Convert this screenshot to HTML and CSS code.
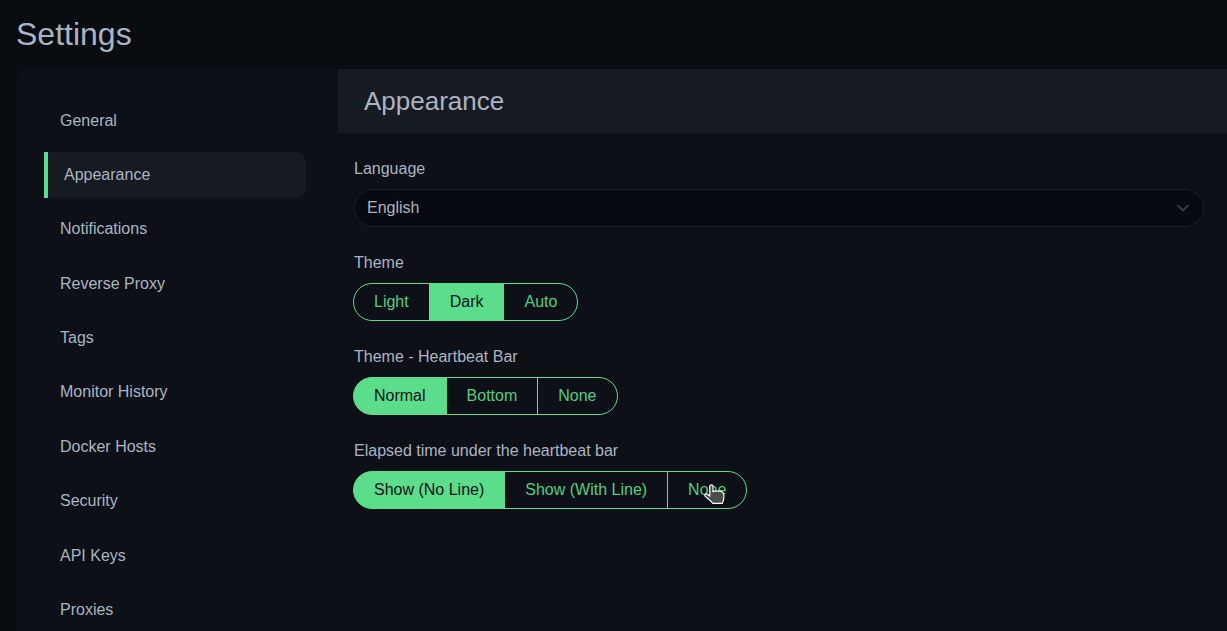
FILE: index.html
```html
<!DOCTYPE html>
<html lang="en">
<head>
    <meta charset="UTF-8">
    <title>Settings</title>
    <link rel="stylesheet" href="styles.css">
</head>
<body>
    <h1 class="page-title">Settings</h1>
    <div class="shadow-box">
        <div class="settings-menu">
            <div class="menu-item">General</div>
            <div class="menu-item active">Appearance</div>
            <div class="menu-item">Notifications</div>
            <div class="menu-item">Reverse Proxy</div>
            <div class="menu-item">Tags</div>
            <div class="menu-item">Monitor History</div>
            <div class="menu-item">Docker Hosts</div>
            <div class="menu-item">Security</div>
            <div class="menu-item">API Keys</div>
            <div class="menu-item">Proxies</div>
        </div>
        <div class="settings-content">
            <div class="settings-content-header">Appearance</div>
            <div class="settings-form">
                <div class="field">
                    <div class="form-label">Language</div>
                    <div class="form-select">
                        <span>English</span>
                        <svg class="select-arrow" width="16" height="16" viewBox="0 0 16 16"><path d="M3 5.500l5 5 5-5" fill="none" stroke="#343b44" stroke-width="2" stroke-linecap="round" stroke-linejoin="round"/></svg>
                    </div>
                </div>
                <div class="field">
                    <div class="form-label">Theme</div>
                    <div class="btn-group">
                        <div class="btn">Light</div>
                        <div class="btn checked">Dark</div>
                        <div class="btn">Auto</div>
                    </div>
                </div>
                <div class="field">
                    <div class="form-label">Theme - Heartbeat Bar</div>
                    <div class="btn-group">
                        <div class="btn checked">Normal</div>
                        <div class="btn">Bottom</div>
                        <div class="btn">None</div>
                    </div>
                </div>
                <div class="field">
                    <div class="form-label">Elapsed time under the heartbeat bar</div>
                    <div class="btn-group">
                        <div class="btn checked">Show (No Line)</div>
                        <div class="btn">Show (With Line)</div>
                        <div class="btn">None
                            <svg class="hand-cursor" width="21" height="22" viewBox="0 -1 20 21"><path d="M5.500 2c0-1.600 3-1.600 3 0v5.200c2-.7 4-.8 5.500-.3 1.500-.3 3 .3 4 1.100.8.800 1 2 1 4 0 2.500-.5 4.500-1.500 6.500H8.500C7 16 3.500 14 1 11.500c-1-1.200.5-2.700 2-1.700l2.500 1.700Z" fill="#4c4c4c" stroke="#fff" stroke-width="1.100" stroke-linejoin="round"/></svg>
                        </div>
                    </div>
                </div>
            </div>
        </div>
    </div>
</body>
</html>
```

FILE: styles.css
```css
* {
    box-sizing: border-box;
}

html, body {
    height: 631px;
    overflow: hidden;
}

body {
    margin: 0;
    padding: 0 0 0 16px;
    background: #090c10;
    color: #abb4c0;
    font-family: "Liberation Sans", Arial, sans-serif;
    font-size: 16px;
    line-height: 24px;
}

.page-title {
    margin: 0;
    height: 69px;
    padding-top: 15px;
    font-size: 32px;
    font-weight: 400;
    line-height: 38px;
}

.shadow-box {
    display: flex;
    background: #0d1117;
    border-radius: 10px 0 0 0;
    height: 562px;
    overflow: hidden;
}

.settings-menu {
    width: 322px;
    flex: none;
    padding: 28.58px 32px 0 28px;
}

.menu-item {
    height: 46.35px;
    margin-bottom: 8px;
    padding: 11.2px 16px;
    border-radius: 0 10px 10px 0;
}

.menu-item.active {
    background: #161b22;
    border-left: 4px solid #5cdd8b;
}

.settings-content {
    flex: 1;
}

.settings-content-header {
    height: 64px;
    padding: 0 26px;
    background: #161b22;
    font-size: 26px;
    line-height: 64px;
}

.settings-form {
    padding: 24px 23px 0 16px;
}

.field {
    margin-bottom: 24px;
}

.form-label {
    margin-bottom: 8px;
}

.form-select {
    display: flex;
    align-items: center;
    justify-content: space-between;
    height: 38px;
    padding: 0 12px;
    background: #070a10;
    border: 1px solid #1c2128;
    border-radius: 19px;
}

.btn-group {
    display: inline-flex;
    height: 38px;
    margin-left: -1px;
}

.btn {
    position: relative;
    padding: 6px 20px;
    border: 1px solid #5cdd8b;
    color: #55cc81;
}

.btn + .btn {
    margin-left: -1px;
}

.btn:first-child {
    border-radius: 19px 0 0 19px;
}

.btn:last-child {
    border-radius: 0 19px 19px 0;
}

.btn.checked {
    background: #5cdd8b;
    color: #0d1117;
}

.hand-cursor {
    position: absolute;
    left: 36px;
    top: 11px;
}
```
